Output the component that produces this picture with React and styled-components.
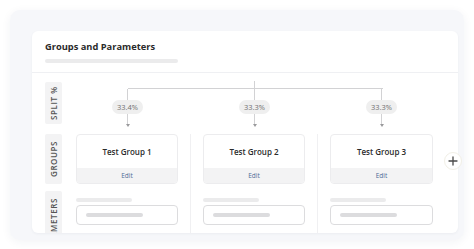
import styled, { createGlobalStyle } from "styled-components";

const Global = createGlobalStyle`
  html, body { margin: 0; padding: 0; background: #ffffff; }
  body { font-family: "Open Sans", "Noto Sans", sans-serif; }
`;

const Page = styled.div`
  width: 474px;
  height: 249px;
  padding: 10px;
  box-sizing: border-box;
  overflow: hidden;
`;

const Frame = styled.div`
  position: relative;
  width: 454px;
  height: 230px;
  box-sizing: border-box;
  padding: 21px 6px 7px 22px;
  background: #f6f7fa;
  border-radius: 10px;
  box-shadow: 0 2px 10px rgba(40, 50, 80, 0.06);
`;

const Card = styled.div`
  height: 100%;
  background: #ffffff;
  border-radius: 6px;
  overflow: hidden;
  box-shadow: 0 1px 3px rgba(40, 50, 80, 0.05);
`;

const Header = styled.div`
  height: 42px;
  box-sizing: border-box;
  padding: 9px 13px 0;
  border-bottom: 1px solid #eff0f3;
`;

const Title = styled.div`
  font-size: 9.3px;
  font-weight: 700;
  color: #2a2a2a;
  line-height: 13px;
`;

const Skeleton = styled.div`
  width: ${(p) => p.w}px;
  height: 4px;
  border-radius: 2px;
  background: ${(p) => p.tone || "#ebebec"};
  margin-top: ${(p) => p.mt || 0}px;
`;

const Body = styled.div`
  display: grid;
  grid-template-columns: 19px repeat(3, 127px);
  grid-template-rows: 61px 50px auto;
  padding-left: 13px;
`;

const LabelCell = styled.div`
  padding-top: ${(p) => p.pt || 0}px;
`;

const Label = styled.div`
  width: 17px;
  height: ${(p) => p.h}px;
  background: #f3f3f4;
  border-radius: 2px;
  display: flex;
  align-items: center;
  justify-content: center;
  writing-mode: vertical-rl;
  transform: rotate(180deg);
  font-size: 8px;
  font-weight: 600;
  letter-spacing: 0.6px;
  color: #555;
  white-space: nowrap;
`;

const SplitCell = styled.div`
  display: flex;
  flex-direction: column;
  align-items: center;
`;

const StubArea = styled.div`
  height: 15px;
  width: 100%;
  display: flex;
  flex-direction: column;
  justify-content: flex-end;
  align-items: center;
`;

const VLine = styled.div`
  width: 1px;
  height: ${(p) => p.h}px;
  background: #d2d2d4;
`;

const HBar = styled.div`
  align-self: stretch;
  height: 1px;
  background: #d2d2d4;
  margin-left: ${(p) => (p.side === "left" ? "50%" : "0")};
  margin-right: ${(p) => (p.side === "right" ? "calc(50% - 1px)" : "0")};
`;

const Pill = styled.div`
  height: 14px;
  padding: 0 5px;
  border-radius: 7px;
  background: #efefef;
  font-size: 7.5px;
  line-height: 14px;
  color: #707070;
`;

const Arrow = styled.div`
  width: 0;
  height: 0;
  border-left: 2px solid transparent;
  border-right: 2px solid transparent;
  border-top: 3px solid #9a9a9c;
`;

const ColCell = styled.div`
  padding: ${(p) => p.pad || "0 12px"};
  border-right: ${(p) => (p.last ? "none" : "1px solid #f0f0f2")};
`;

const GroupCard = styled.div`
  height: 50px;
  box-sizing: border-box;
  border: 1px solid #ececee;
  border-radius: 4px;
  overflow: hidden;
  display: flex;
  flex-direction: column;
`;

const GroupName = styled.div`
  flex: 1;
  display: flex;
  align-items: center;
  justify-content: center;
  font-size: 8px;
  font-weight: 600;
  color: #2b2b2b;
`;

const EditBar = styled.div`
  height: 15px;
  background: #f3f3f4;
  display: flex;
  align-items: center;
  justify-content: center;
  font-size: 6.5px;
  color: #4d6a94;
`;

const InputBox = styled.div`
  margin-top: 3px;
  height: 20px;
  box-sizing: border-box;
  border: 1px solid #dcdcde;
  border-radius: 4px;
  display: flex;
  align-items: center;
  padding-left: 9px;
`;

const PlusButton = styled.div`
  position: absolute;
  left: 434px;
  top: 142px;
  width: 18px;
  height: 18px;
  border-radius: 50%;
  background: #fff;
  border: 1px solid #f1efe6;
  box-sizing: border-box;
  display: flex;
  align-items: center;
  justify-content: center;
  color: #4a4a4a;
`;

const splits = ["33.4%", "33.3%", "33.3%"];
const groups = ["Test Group 1", "Test Group 2", "Test Group 3"];
const sides = ["left", "full", "right"];

export default function App() {
  return (
    <Page>
      <Global />
      <Frame>
        <Card>
          <Header>
            <Title>Groups and Parameters</Title>
            <Skeleton w={133} mt={6} />
          </Header>
          <Body>
            <LabelCell pt={9}>
              <Label h={42}>SPLIT %</Label>
            </LabelCell>
            {splits.map((s, i) => (
              <SplitCell key={"s" + i}>
                <StubArea>{i === 1 && <VLine h={7} />}</StubArea>
                <HBar side={sides[i]} />
                <VLine h={11} />
                <Pill>{s}</Pill>
                <VLine h={10} />
                <Arrow />
              </SplitCell>
            ))}

            <LabelCell>
              <Label h={50}>GROUPS</Label>
            </LabelCell>
            {groups.map((g, i) => (
              <ColCell key={"g" + i} last={i === 2}>
                <GroupCard>
                  <GroupName>{g}</GroupName>
                  <EditBar>Edit</EditBar>
                </GroupCard>
              </ColCell>
            ))}

            <LabelCell pt={7}>
              <Label h={72}>PARAMETERS</Label>
            </LabelCell>
            {groups.map((g, i) => (
              <ColCell key={"p" + i} last={i === 2} pad="14px 12px 0">
                <Skeleton w={56} />
                <InputBox>
                  <Skeleton w={57} tone="#dcdcde" />
                </InputBox>
              </ColCell>
            ))}
          </Body>
        </Card>
        <PlusButton>
          <svg width="10" height="10" viewBox="0 0 10 10">
            <path d="M5 1v8M1 5h8" stroke="#4a4a4a" strokeWidth="1.3" strokeLinecap="round" />
          </svg>
        </PlusButton>
      </Frame>
    </Page>
  );
}
